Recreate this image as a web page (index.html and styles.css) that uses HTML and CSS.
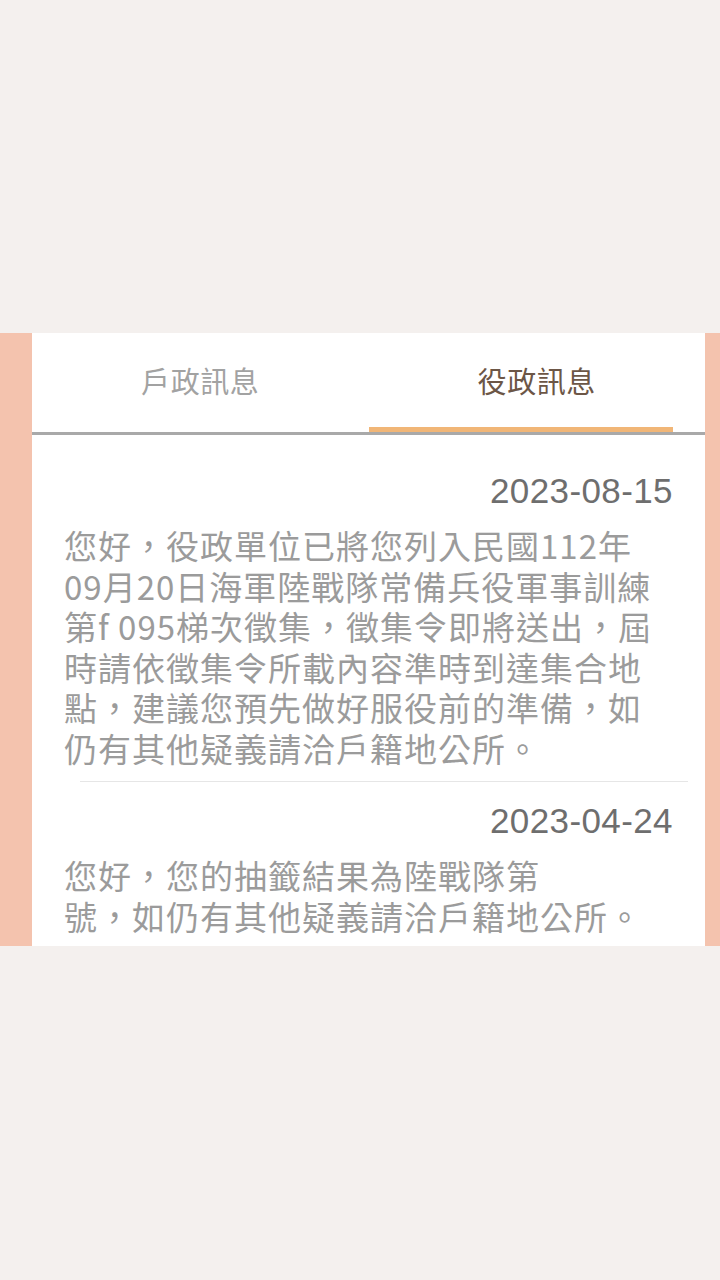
FILE: index.html
```html
<!DOCTYPE html>
<html lang="zh-Hant">
<head>
<meta charset="utf-8">
<title>役政訊息</title>
<link rel="stylesheet" href="styles.css">
</head>
<body>
<div class="top"></div>
<div class="band">
  <div class="strip strip-left"></div>
  <div class="panel">
    <div class="tabs">
      <div class="tab">
        <span class="tab-label">戶政訊息</span>
        <span class="tab-bar"></span>
      </div>
      <div class="tab tab-active">
        <span class="tab-label">役政訊息</span>
        <span class="tab-bar"></span>
      </div>
    </div>
    <div class="list">
      <div class="msg">
        <div class="msg-date">2023-08-15</div>
        <p class="msg-text">您好，役政單位已將您列入民國112年<br>09月20日海軍陸戰隊常備兵役軍事訓練<br>第f 095梯次徵集，徵集令即將送出，屆<br>時請依徵集令所載內容準時到達集合地<br>點，建議您預先做好服役前的準備，如<br>仍有其他疑義請洽戶籍地公所。</p>
      </div>
      <div class="sep"></div>
      <div class="msg">
        <div class="msg-date">2023-04-24</div>
        <p class="msg-text">您好，您的抽籤結果為陸戰隊第<br>號，如仍有其他疑義請洽戶籍地公所。</p>
      </div>
    </div>
  </div>
  <div class="strip strip-right"></div>
</div>
<div class="bottom"></div>
</body>
</html>
```
FILE: styles.css
```css
html, body {
  margin: 0;
  padding: 0;
}
body {
  width: 720px;
  height: 1280px;
  background: #f4f0ee;
  font-family: "Noto Sans CJK TC", "Noto Sans", sans-serif;
  overflow: hidden;
}
.top {
  height: 333px;
}
.band {
  display: flex;
  height: 613px;
}
.strip {
  background: #f4c3ae;
}
.strip-left {
  width: 32px;
}
.strip-right {
  width: 15px;
}
.panel {
  flex: 1;
  background: #ffffff;
  overflow: hidden;
}
.tabs {
  display: flex;
  height: 99px;
  border-bottom: 3px solid #a9a9a9;
}
.tab {
  flex: 1;
  display: flex;
  flex-direction: column;
  align-items: stretch;
  justify-content: space-between;
}
.tab-label {
  display: block;
  text-align: center;
  font-size: 29px;
  letter-spacing: 0.6px;
  line-height: 40px;
  margin-top: 27px;
  color: #a2a2a2;
}
.tab-bar {
  display: block;
  height: 5px;
}
.tab-active .tab-label {
  color: #6c5646;
}
.tab-active .tab-bar {
  background: #f1b677;
  margin-right: 32px;
}
.list {
  padding: 0 32px;
}
.msg-date {
  margin-top: 36px;
  text-align: right;
  font-family: "Liberation Sans", Arial, sans-serif;
  font-size: 35px;
  letter-spacing: 0.4px;
  line-height: 40px;
  color: #6e6e6e;
}
.msg-text {
  margin: 14px 0 0 0;
  font-size: 33px;
  letter-spacing: 1px;
  line-height: 40.5px;
  color: #9b9b9b;
  white-space: nowrap;
}
.sep {
  margin: 13px -15px 0 16px;
  height: 1px;
  background: #e6e6e6;
}
.sep + .msg .msg-date {
  margin-top: 19px;
}
.bottom {
  height: 334px;
}
```
